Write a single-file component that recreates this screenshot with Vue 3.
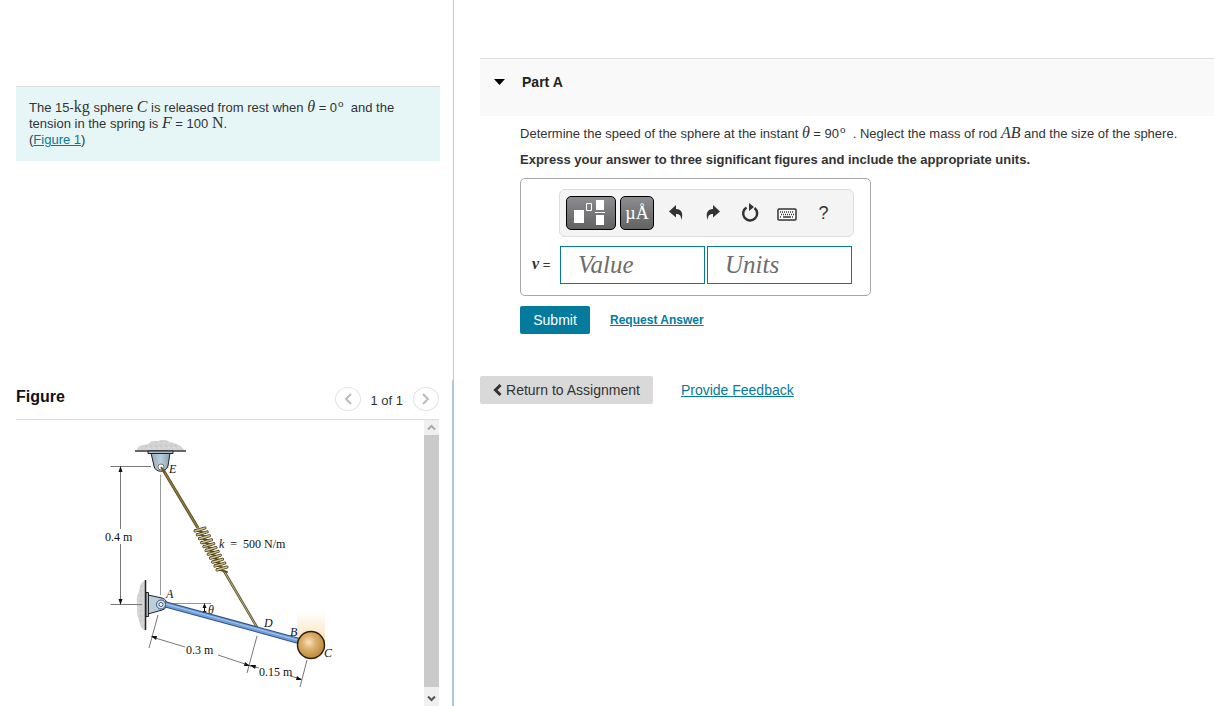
<template>
  <div class="page">
    <aside class="sidebar">
      <section class="intro">
        <div class="problem">
          The 15-<span class="math">kg</span> sphere <i class="math">C</i> is released from rest when
          <i class="math">θ</i> = 0<span class="degree">o</span>&nbsp; and the<br />
          tension in the spring is <i class="math">F</i> = 100 <span class="math">N</span>.<br />
          (<a href="#figure">Figure 1</a>)
        </div>
      </section>

      <section id="figure" class="figure">
        <header class="figure-header">
          <h2>Figure</h2>
          <nav class="pager">
            <button aria-label="Previous figure" @click="step(-1)">
              <svg width="10" height="14" viewBox="0 0 10 14"><path d="M8 2 3 7l5 5" /></svg>
            </button>
            <span>{{ current }} of {{ total }}</span>
            <button aria-label="Next figure" @click="step(1)">
              <svg width="10" height="14" viewBox="0 0 10 14"><path d="m2 2 5 5-5 5" /></svg>
            </button>
          </nav>
        </header>

        <div class="viewer">
          <svg class="diagram" width="408" height="286" viewBox="16 420 408 286">
            <defs>
              <linearGradient id="steel" x1="0" x2="1">
                <stop offset="0" stop-color="#8ea6b8" />
                <stop offset="0.5" stop-color="#bccddb" />
                <stop offset="1" stop-color="#8aa2b5" />
              </linearGradient>
              <radialGradient id="ball" cx="0.42" cy="0.4" r="0.65">
                <stop offset="0" stop-color="#f8e3bd" />
                <stop offset="0.4" stop-color="#dcb06c" />
                <stop offset="1" stop-color="#b98438" />
              </radialGradient>
              <linearGradient id="trail" x1="0" x2="0" y1="0" y2="1">
                <stop offset="0" stop-color="#fff" />
                <stop offset="1" stop-color="#fbe0b4" />
              </linearGradient>
              <pattern id="stone" width="5" height="5" patternUnits="userSpaceOnUse">
                <rect width="5" height="5" fill="#d2d2d2" />
                <circle cx="1" cy="1" r="1" fill="#c8c8c8" />
                <circle cx="4" cy="3" r="1" fill="#dadada" />
              </pattern>
            </defs>

            <!-- supports -->
            <path fill="url(#stone)" d="M137 450c0-4 5-5 11-6 3-4 7-3 10-3 5-2 9-1 12 1 6 1 12 4 14 8z" />
            <path stroke="#333" stroke-width="1.5" d="M135 451h51" />
            <path fill="url(#steel)" stroke="#222" d="m151 453 3 13c1 7 12 7 14 0l2-13z" />
            <path fill="#a9bdcc" stroke="#222" d="M148 451h25v2.5h-25z" />
            <path fill="url(#stone)" d="M145 581c-5 1-5 6-6 11-3 4-2 8-2 13 0 6 0 11 2 15 1 5 2 9 6 10z" />
            <path stroke="#222" stroke-width="1.5" d="M145.500 580v50" />
            <path fill="#bccddb" stroke="#222" d="m148 595 14 3c7 2 6 11 0 12l-14 4z" />
            <path fill="#a9bdcc" stroke="#222" d="M146 592.500h2.500v24H146z" />

            <!-- dimension lines -->
            <g fill="none" stroke="#777">
              <path d="M110.500 466.500H151M120.500 470v59M120.500 544v58M110.500 604.500H142" />
              <path stroke="#999" d="M160.500 475v120M166 603.500h45" />
              <path d="m158 615-9 33M257 636l-10 37M307 660l-7 27" />
              <path d="m152 637 33 10M218 655l33 11M250 666l9 2M290 676l11 3" />
            </g>
            <path
              fill="#111"
              d="m120.500 466-2 6h4zM120.500 605l-2-6h4zM151 636h6l-1 4zM250 666h-6l1-4zM250 665h6l-1 4zM302 680h-6l1-4zM204.500 603l-2 5h4zM204.500 616l-2-5h4z"
            />
            <path stroke="#111" d="M204.500 605v9" />

            <!-- spring and cord -->
            <path stroke="#4f4520" stroke-width="3" d="m162 468 36 60" />
            <path stroke="#8f7c3c" stroke-width="1.5" d="m162 468 36 60" />
            <path stroke="#5f5732" stroke-width="2.5" d="m224 571 34 58" />
            <path stroke="#b9ae80" d="m224 571 34 58" />
            <g v-for="n in 11" :key="n" :transform="coil(n)">
              <path stroke="#5c5128" stroke-width="2" stroke-linecap="round" d="M-5 0 5 3" />
              <path stroke="#4b421f" stroke-width="3" stroke-linecap="round" d="M-5 1 5-2" />
              <path stroke="#d0c389" stroke-width="1.5" stroke-linecap="round" d="M-5 1 5-2" />
            </g>

            <!-- rod and sphere -->
            <path fill="url(#trail)" d="M297 611h28v32h-28z" />
            <path stroke="#34527f" stroke-width="6" d="m164 604 135 37" />
            <path stroke="#6f9edb" stroke-width="4" d="m164 604 135 37" />
            <path stroke="#a8c8f0" d="m164 603.500 135 37" />
            <circle cx="161" cy="467" r="3" fill="#fff" stroke="#777" />
            <path stroke="#6b5d2b" stroke-width="2" d="m161 467 4 6" />
            <circle cx="161" cy="604.500" r="4.500" fill="#d3e2f1" stroke="#34527f" />
            <circle cx="161" cy="604.500" r="2" fill="#fff" stroke="#456" />
            <circle cx="311" cy="645" r="13.500" fill="url(#ball)" stroke="#2d2010" stroke-width="1.5" />

            <g class="labels">
              <text x="105" y="541">0.4 m</text>
              <text x="186" y="654">0.3 m</text>
              <text x="259" y="676">0.15 m</text>
              <text x="219" y="548"><tspan class="var">k</tspan>&nbsp;&nbsp;=&nbsp; 500 N/m</text>
              <text class="var" x="169" y="473">E</text>
              <text class="var" x="166" y="598">A</text>
              <text class="var" x="208" y="614">θ</text>
              <text class="var" x="264" y="627">D</text>
              <text class="var" x="290" y="636">B</text>
              <text class="var" x="324" y="657">C</text>
            </g>
          </svg>

          <div class="scrollbar">
            <button class="up" aria-label="Scroll up">
              <svg width="9" height="7" viewBox="0 0 9 7"><path d="m1 5.500 3.500-3.500L8 5.500" /></svg>
            </button>
            <div class="thumb"></div>
            <button class="down" aria-label="Scroll down">
              <svg width="9" height="7" viewBox="0 0 9 7"><path d="m1 1.500 3.500 3.500L8 1.500" /></svg>
            </button>
          </div>
        </div>
      </section>
    </aside>

    <main>
      <header class="part-header">
        <button class="toggle" aria-label="Toggle Part A" @click="open = !open">
          <svg width="11" height="6" viewBox="0 0 11 6"><path d="M0 0h11L5.500 6z" /></svg>
        </button>
        <h1>Part A</h1>
      </header>

      <form v-if="open" class="part" @submit.prevent>
        <p>
          Determine the speed of the sphere at the instant <i class="math">θ</i> = 90<span class="degree">o</span>
          &nbsp;. Neglect the mass of rod <i class="math">AB</i> and the size of the sphere.
        </p>
        <p class="directions">Express your answer to three significant figures and include the appropriate units.</p>

        <div class="answer">
          <div class="toolbar">
            <button type="button" class="dark templates" aria-label="Templates">
              <svg width="34" height="26" viewBox="0 0 34 26">
                <path fill="#fff" d="M0 10h10v13H0zM22 0h8v10h-8zM22 15h8v10h-8zM21 12h10v1H21z" />
                <path fill="none" stroke="#fff" d="M12.500 3.500h5v7h-5z" />
              </svg>
            </button>
            <button type="button" class="dark symbols" aria-label="Units">µÅ</button>
            <button type="button" class="tool" aria-label="Undo">
              <svg width="16" height="18" viewBox="0 0 16 18">
                <path d="M1 7.500 8 1v4c5.500 0 7.500 4 5.500 11-.5-4.500-2-6-5.500-6v3.500z" />
              </svg>
            </button>
            <button type="button" class="tool" aria-label="Redo">
              <svg width="16" height="18" viewBox="0 0 16 18">
                <path d="M15 7.500 8 1v4c-5.500 0-7.500 4-5.500 11 .5-4.500 2-6 5.500-6v3.500z" />
              </svg>
            </button>
            <button type="button" class="tool" aria-label="Reset">
              <svg width="18" height="20" viewBox="0 0 18 20">
                <path fill="none" stroke="#333" stroke-width="2.500" d="M5.500 4.500A7 7 0 1 0 13.500 5" />
                <path d="m8 0 5 4-5 4z" />
              </svg>
            </button>
            <button type="button" class="tool" aria-label="Keyboard">
              <svg class="keyboard" width="20" height="13" viewBox="0 0 20 13">
                <rect x="1" y="1" width="18" height="11" rx="1" fill="#fff" stroke="#333" stroke-width="1.500" />
                <path
                  fill="none"
                  stroke="#333"
                  stroke-dasharray="1 1"
                  stroke-width="1.500"
                  d="M3 4h14M4 6.500h13M3 9h2M15 9h2"
                />
                <path stroke="#333" stroke-width="1.500" d="M6 9h8" />
              </svg>
            </button>
            <button type="button" class="tool help" aria-label="Help">?</button>
          </div>
          <div class="fields">
            <label for="value"><i class="math">v</i> =</label>
            <input id="value" v-model="value" placeholder="Value" />
            <input v-model="units" placeholder="Units" aria-label="Units" />
          </div>
        </div>

        <div class="actions">
          <button class="submit">Submit</button>
          <a href="#answer">Request Answer</a>
        </div>
      </form>

      <footer>
        <button class="return">
          <svg width="9" height="12" viewBox="0 0 9 12"><path d="M7.500 1 2.500 6l5 5" /></svg>
          Return to Assignment
        </button>
        <a href="#feedback">Provide Feedback</a>
      </footer>
    </main>
  </div>
</template>


<script setup>
import { ref } from 'vue';

const current = ref(1);
const total = ref(1);
const open = ref(true);
const value = ref('');
const units = ref('');

const step = (by) => {
  current.value = Math.min(total.value, Math.max(1, current.value + by));
};

// coils are spaced evenly along the line from E to D
const coil = (n) => {
  const t = (n - 1) / 10;
  return `translate(${200 + t * 22} ${530 + t * 39})`;
};
</script>


<style>
body {
  margin: 0;
}
</style>

<style scoped>
.page {
  display: flex;
  min-height: 100vh;
  font-family: "Liberation Sans", Arial, sans-serif;
  font-size: 13px;
  line-height: 16px;
  color: #333;
  background-color: #fff;
}

button {
  padding: 0;
  border: none;
  font-family: inherit;
  color: inherit;
  cursor: pointer;
}

a {
  color: #047a9c;
}

h1,
h2,
p {
  margin: 0;
}

.math {
  font-family: "Liberation Serif", "Times New Roman", serif;
  font-size: 16px;
  line-height: 0;
}

.degree {
  padding-left: 1px;
  font-family: "Liberation Serif", "Times New Roman", serif;
  font-size: 11px;
  line-height: 0;
  vertical-align: 5px;
}

.sidebar {
  display: flex;
  flex: 0 0 37.4%;
  flex-direction: column;
  box-sizing: border-box;
  min-width: 0;
}

.intro {
  flex: 1;
  padding: 86px 13px 0 16px;
  border-right: 1px solid #c3c9d6;
}

.problem {
  min-height: 50px;
  padding: 13px 13px 11px;
  border-top: 1px solid #dcdcdc;
  background-color: #e6f6f6;
}

.figure {
  padding: 0 13px 0 16px;
  border-right: 2px solid #b4c6dc;
}

.figure-header {
  display: flex;
  align-items: center;
  justify-content: space-between;
  height: 39px;
  border-bottom: 1px solid #dcdcdc;
}

h2 {
  padding-bottom: 6px;
  font-size: 16px;
  color: #111;
}

.pager {
  display: flex;
  align-items: center;
  gap: 10px;
  padding-bottom: 1px;
}

.pager span {
  padding-top: 3px;
}

.pager button {
  display: flex;
  align-items: center;
  justify-content: center;
  box-sizing: border-box;
  width: 26px;
  height: 24px;
  border: 1px solid #e4e4e4;
  border-radius: 50%;
  background-color: #fff;
}

.pager path {
  fill: none;
  stroke: #bbb;
  stroke-width: 2;
}

.viewer {
  display: flex;
  justify-content: space-between;
}

.diagram {
  display: block;
  flex: 0 1 auto;
  min-width: 0;
}

.labels {
  font-family: "Liberation Serif", "Times New Roman", serif;
  font-size: 12px;
  fill: #111;
}

.var {
  font-style: italic;
}

.scrollbar {
  display: flex;
  flex: 0 0 15px;
  flex-direction: column;
  background-color: #f0f0f0;
}

.scrollbar button {
  display: flex;
  align-items: center;
  justify-content: center;
  height: 15px;
  background-color: #f0f0f0;
}

.scrollbar .down {
  height: 19px;
  padding-top: 4px;
}

.scrollbar path {
  fill: none;
  stroke: #aaa;
  stroke-width: 2;
}

.scrollbar .down path {
  stroke: #555;
}

.thumb {
  flex: 1;
  background-color: #cacaca;
}

main {
  flex: 1;
  min-width: 0;
  padding: 58px 0 0 26px;
}

.part-header {
  display: flex;
  align-items: flex-start;
  gap: 17px;
  height: 42px;
  padding: 15px 14px 0;
  border-top: 1px solid #dcdcdc;
  background-color: #f9f9f9;
}

.toggle {
  display: flex;
  align-items: center;
  height: 16px;
  background: none;
}

h1 {
  font-size: 14px;
  color: #222;
}

.part {
  padding: 9px 10px 0 40px;
}

.part p {
  line-height: 18px;
}

.part .directions {
  padding-top: 8px;
  font-weight: bold;
}

.answer {
  box-sizing: border-box;
  width: fit-content;
  margin-top: 9px;
  padding: 10px 18px 11px 11px;
  border: 1px solid #a9a9a9;
  border-radius: 5px;
}

.toolbar {
  display: flex;
  align-items: center;
  box-sizing: border-box;
  height: 48px;
  margin: 0 -2px 9px 27px;
  padding: 0 6px;
  border: 1px solid #ddd;
  border-radius: 6px;
  background-color: #f4f4f4;
}

.dark {
  display: flex;
  align-items: center;
  justify-content: center;
  box-sizing: border-box;
  width: 34px;
  height: 34px;
  margin-right: 4px;
  border: 1px solid #000;
  border-radius: 5px;
  background: linear-gradient(#8c8c92, #626262);
  color: #fff;
}

.symbols {
  margin-right: 3px;
  font-family: "Liberation Serif", "Times New Roman", serif;
  font-size: 18px;
}

.templates {
  width: 50px;
}

.tool {
  display: flex;
  align-items: center;
  justify-content: center;
  width: 37px;
  height: 34px;
  background: none;
  fill: #333;
}

.keyboard {
  padding-top: 3px;
}

.help {
  font-size: 18px;
}

.fields {
  display: flex;
  align-items: center;
  gap: 2px;
}

.fields label {
  width: 26px;
  white-space: nowrap;
}

.fields .math {
  font-weight: bold;
}

input {
  box-sizing: border-box;
  width: 145px;
  height: 38px;
  padding: 0 17px;
  border: 1px solid #047a9c;
  font-family: "Liberation Serif", "Times New Roman", serif;
  font-size: 25px;
  font-style: italic;
  color: #333;
  background-color: #fff;
}

input::placeholder {
  color: #6d6d6d;
}

.actions {
  display: flex;
  align-items: center;
  gap: 20px;
  margin-top: 10px;
  font-size: 12px;
  font-weight: bold;
}

.submit {
  width: 70px;
  height: 28px;
  border-radius: 2px;
  font-size: 14px;
  color: #fff;
  background-color: #047a9c;
}

footer {
  display: flex;
  align-items: center;
  gap: 28px;
  margin-top: 42px;
  font-size: 14px;
}

.return {
  display: flex;
  align-items: center;
  gap: 4px;
  height: 28px;
  padding: 0 13px;
  border-radius: 2px;
  font-size: 14px;
  background-color: #d9d9d9;
}

.return path {
  fill: none;
  stroke: #333;
  stroke-width: 3;
}
</style>
